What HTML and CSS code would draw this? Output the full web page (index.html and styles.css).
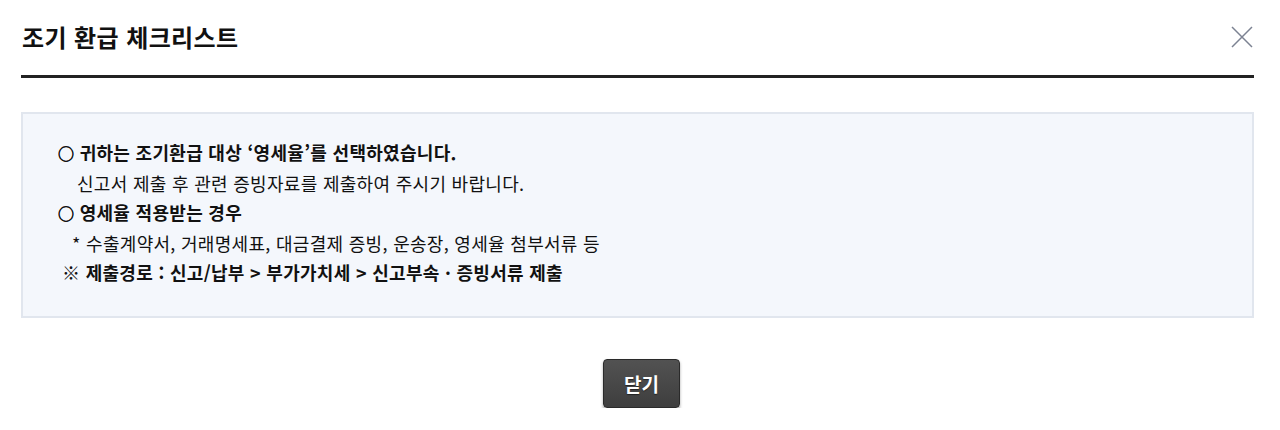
FILE: index.html
```html
<!DOCTYPE html>
<html lang="ko">
<head>
<meta charset="utf-8">
<link rel="stylesheet" href="styles.css">
</head>
<body>
<div class="modal">
  <header class="modal-head">
    <h1 class="modal-title">조기 환급 체크리스트</h1>
    <button class="close-btn" aria-label="닫기">
      <svg width="22" height="22" viewBox="0 0 22 22"><path d="M1 1L21 21M21 1L1 21" stroke="#7c8292" stroke-width="1.5" fill="none"/></svg>
    </button>
  </header>
  <section class="notice">
    <p class="bold"><span class="mark">○</span> 귀하는 조기환급 대상 ‘영세율’를 선택하였습니다.</p>
    <p class="indent">신고서 제출 후 관련 증빙자료를 제출하여 주시기 바랍니다.</p>
    <p class="bold"><span class="mark">○</span> 영세율 적용받는 경우</p>
    <p class="indent-sm">* 수출계약서, 거래명세표, 대금결제 증빙, 운송장, 영세율 첨부서류 등</p>
    <p class="bold path">※ 제출경로 : 신고/납부 &gt; 부가가치세 &gt; 신고부속 · 증빙서류 제출</p>
  </section>
  <div class="actions">
    <button class="btn-close">닫기</button>
  </div>
</div>
</body>
</html>
```
FILE: styles.css
```css
* { box-sizing: border-box; }
body {
  margin: 0;
  background: #fff;
  font-family: "Noto Sans CJK KR", "Noto Sans", sans-serif;
  color: #111;
}
.modal {
  padding: 0 26px 0 21px;
}
.modal-head {
  display: flex;
  align-items: center;
  justify-content: space-between;
  height: 78px;
  border-bottom: 3px solid #222;
  padding-bottom: 2px;
}
.modal-title {
  margin: 0;
  font-size: 24px;
  font-weight: 700;
  letter-spacing: 0.4px;
  color: #111;
  padding-left: 1px;
}
.close-btn {
  background: none;
  border: 0;
  padding: 0;
  width: 22px;
  height: 22px;
  margin-right: 1px;
  display: flex;
}
.notice {
  margin-top: 34px;
  background: #f4f7fc;
  border: 2px solid #e1e6ee;
  padding: 24px 0 28px 35px;
  font-size: 18px;
  line-height: 29.5px;
  letter-spacing: 0.3px;
}
.notice p { margin: 0; }
.bold { font-weight: 700; }
.mark { font-size: 16px; font-weight: 400; -webkit-text-stroke: 0.6px #111; }
.indent { padding-left: 19px; }
.indent-sm { padding-left: 14px; }
.path { padding-left: 4px; }
.actions {
  display: flex;
  justify-content: center;
  margin-top: 41px;
}
.btn-close {
  width: 77px;
  height: 49px;
  margin-left: 8px;
  border: 1px solid #2a2a2a;
  border-radius: 4px;
  background: linear-gradient(#525252, #3e3e3e);
  box-shadow: 0 2px 3px rgba(0,0,0,0.35);
  color: #fff;
  font-family: "Noto Sans CJK KR", sans-serif;
  font-size: 19px;
  font-weight: 700;
  text-shadow: 0 1px 1px rgba(0,0,0,0.5);
}
```
